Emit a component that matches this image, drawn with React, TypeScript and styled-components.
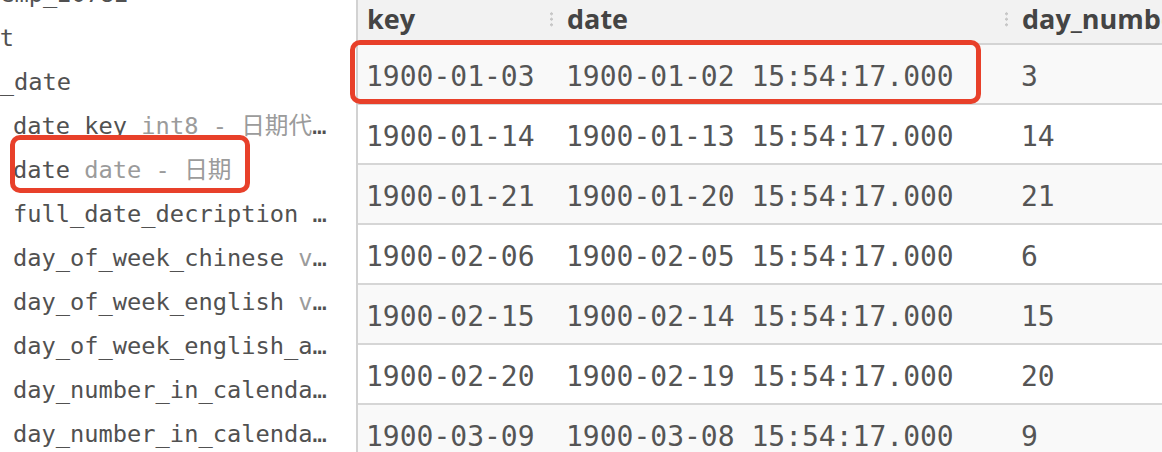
import React from 'react'
import styled, { createGlobalStyle } from 'styled-components'

const GlobalStyle = createGlobalStyle`
  html, body { margin: 0; padding: 0; background: #fff; }
  body { width: 1162px; height: 452px; overflow: hidden; }
`

const mono = `"DejaVu Sans Mono", "Noto Sans CJK SC", monospace`

const Wrap = styled.div`
  position: relative;
  display: flex;
  width: 1162px;
  height: 452px;
  overflow: hidden;
  background: #fff;
`

const Tree = styled.div`
  width: 356px;
  flex-shrink: 0;
  overflow: hidden;
  border-right: 2px solid #d2d2d2;
  font-family: ${mono};
  font-size: 23.7px;
  color: #515151;
`

const TreeList = styled.div`
  margin-top: -28px;
  padding-right: 25px;
`

// indent may be negative: the tree is scrolled sideways
const TreeItem = styled.div<{ $indent: number }>`
  height: 44px;
  line-height: 44px;
  margin-left: ${p => p.$indent}px;
  white-space: nowrap;
  overflow: hidden;
  text-overflow: ellipsis;
  .type {
    color: #9b9b9b;
  }
`

const Table = styled.div`
  flex: 1;
  display: flex;
  flex-direction: column;
  min-width: 0;
`

const HeadRow = styled.div`
  display: grid;
  grid-template-columns: 200px 455px 1fr;
  height: 44px;
  background: #f2f2f2;
  border-bottom: 2px solid #d4d4d4;
  font-family: "Open Sans", "Noto Sans", sans-serif;
  font-weight: 700;
  font-size: 27px;
  color: #444;
`

const HeadCell = styled.div`
  position: relative;
  display: flex;
  align-items: center;
  padding-left: 9px;
  padding-bottom: 6px;
  white-space: nowrap;
  overflow: hidden;
`

const Grip = styled.span`
  position: absolute;
  right: 5px;
  top: 11px;
  width: 3px;
  height: 16px;
  background: radial-gradient(circle, #c6c6c6 1.3px, transparent 1.6px) 0 0 / 3px 5.5px repeat-y;
`

const Row = styled.div<{ $alt: boolean }>`
  display: grid;
  grid-template-columns: 200px 455px 1fr;
  height: 58px;
  flex-shrink: 0;
  background: ${p => (p.$alt ? '#f9f9f9' : '#fff')};
  border-bottom: 2px solid #d6d6d6;
  font-family: ${mono};
  font-size: 28px;
  color: #555;
`

const Cell = styled.div`
  display: flex;
  align-items: center;
  padding-left: 8px;
  padding-top: 5px;
  white-space: nowrap;
  overflow: hidden;
`

const Mark = styled.div<{ $x: number; $y: number; $w: number; $h: number }>`
  position: absolute;
  left: ${p => p.$x}px;
  top: ${p => p.$y}px;
  width: ${p => p.$w}px;
  height: ${p => p.$h}px;
  box-sizing: border-box;
  border: 5px solid #e8402a;
  border-radius: 10px;
  pointer-events: none;
`

const treeItems: { name: string; type?: string; indent: number }[] = [
  { name: 'temp_20782', indent: -14 },
  { name: 'test', indent: -43 },
  { name: 'dim_date', indent: -43 },
  { name: 'date_key', type: 'int8 - 日期代码主键', indent: 13 },
  { name: 'date', type: 'date - 日期', indent: 13 },
  { name: 'full_date_decription', type: 'varchar - 完整日期描述', indent: 13 },
  { name: 'day_of_week_chinese', type: 'varchar - 星期', indent: 13 },
  { name: 'day_of_week_english', type: 'varchar - 星期英文', indent: 13 },
  { name: 'day_of_week_english_abbr', type: 'varchar', indent: 13 },
  { name: 'day_number_in_calendar_month', type: 'int4', indent: 13 },
  { name: 'day_number_in_calendar_year', type: 'int4', indent: 13 },
]

const rows = [
  ['1900-01-03', '1900-01-02 15:54:17.000', '3'],
  ['1900-01-14', '1900-01-13 15:54:17.000', '14'],
  ['1900-01-21', '1900-01-20 15:54:17.000', '21'],
  ['1900-02-06', '1900-02-05 15:54:17.000', '6'],
  ['1900-02-15', '1900-02-14 15:54:17.000', '15'],
  ['1900-02-20', '1900-02-19 15:54:17.000', '20'],
  ['1900-03-09', '1900-03-08 15:54:17.000', '9'],
]

export default function App() {
  return (
    <Wrap>
      <GlobalStyle />
      <Tree>
        <TreeList>
          {treeItems.map((item, i) => (
            <TreeItem key={i} $indent={item.indent}>
              {item.name}
              {item.type && <span className="type"> {item.type}</span>}
            </TreeItem>
          ))}
        </TreeList>
      </Tree>
      <Table>
        <HeadRow>
          <HeadCell>key<Grip /></HeadCell>
          <HeadCell>date<Grip /></HeadCell>
          <HeadCell>day_number_in_calendar_month</HeadCell>
        </HeadRow>
        {rows.map((r, i) => (
          <Row key={i} $alt={i % 2 === 0}>
            {r.map((c, j) => <Cell key={j}>{c}</Cell>)}
          </Row>
        ))}
      </Table>
      <Mark $x={10} $y={135} $w={240} $h={58} />
      <Mark $x={350} $y={40} $w={631} $h={64} />
    </Wrap>
  )
}
